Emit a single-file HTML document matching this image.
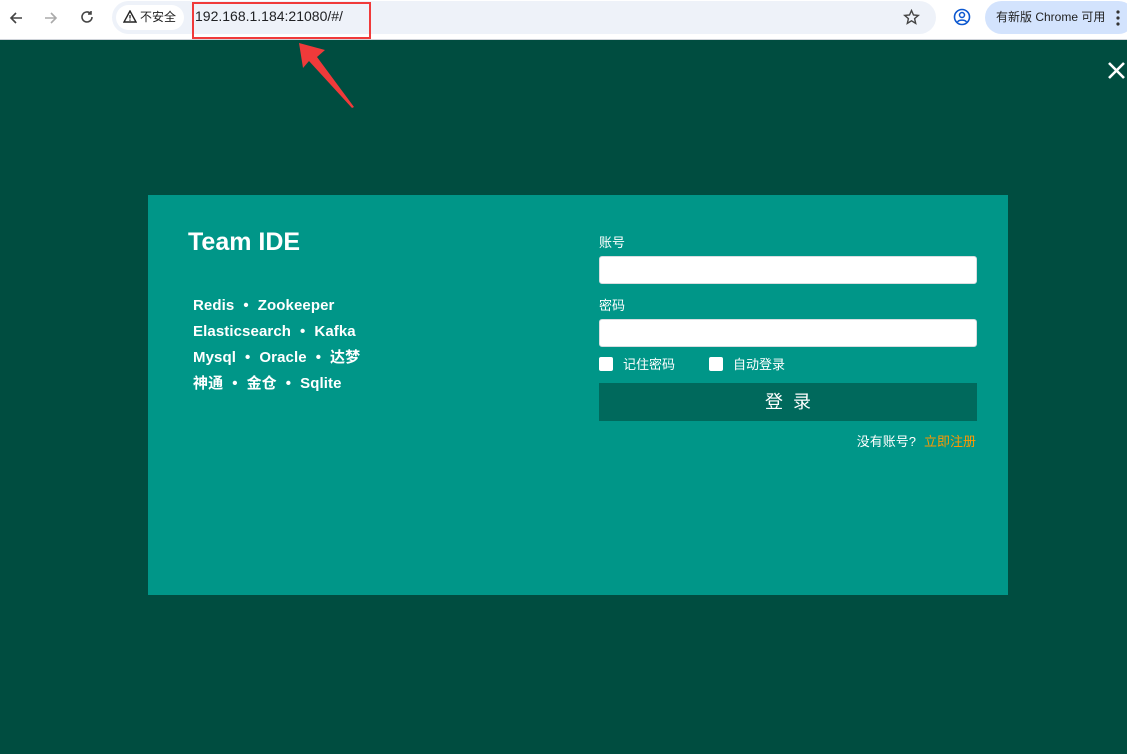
<!DOCTYPE html>
<html><head><meta charset="utf-8"><style>
*{margin:0;padding:0;box-sizing:border-box}
body{width:1127px;height:754px;overflow:hidden;background:#004d40;font-family:"Liberation Sans","Noto Sans CJK SC",sans-serif;position:relative}
.bar{position:absolute;left:0;top:0;width:1127px;height:40px;background:#fff;border-bottom:1px solid #d0d4da}
.omni{position:absolute;left:112px;top:1px;width:824px;height:33px;background:#eef2f9;border-radius:17px}
.sec{position:absolute;left:116px;top:5px;width:68px;height:25px;background:#fff;border-radius:13px;font-size:12px;color:#222;line-height:25px;padding-left:24px}
.url{position:absolute;left:195px;top:8px;font-size:14px;color:#202124}
.redbox{position:absolute;left:192px;top:2px;width:179px;height:37px;border:2px solid #f03a3a}
.upd{position:absolute;left:985px;top:1px;width:150px;height:33px;background:#d3e3fd;border-radius:17px;font-size:12px;color:#1f1f1f;line-height:33px;padding-left:11px}
.card{position:absolute;left:148px;top:195px;width:860px;height:400px;background:#009688}
.title{position:absolute;left:40px;top:33px;color:#fff;font-size:25px;font-weight:bold}
.dbs{position:absolute;left:45px;top:98px;color:#fff;font-size:15px;letter-spacing:0.1px;font-weight:bold;line-height:26px}
.dbs b{display:inline-block;margin:0 9px}
.lbl{position:absolute;left:451px;color:#fff;font-size:13px}
.inp{position:absolute;left:451px;width:378px;height:28px;background:#fff;border-radius:3px;border:1px solid #d8dde0}
.cb{position:absolute;top:162px;width:14px;height:14px;background:#fff;border-radius:2px}
.btn{position:absolute;left:451px;top:188px;width:378px;height:38px;background:#00695c;color:#fff;font-size:18px;text-align:center;line-height:38px;letter-spacing:10px;padding-left:10px}
.reg{position:absolute;right:32px;top:236px;font-size:13px;color:#fff}
.reg span{color:#ff9800;margin-left:8px}
</style></head><body>
<div class="bar">
<svg style="position:absolute;left:8px;top:10px" width="16" height="16" viewBox="0 0 16 16"><path d="M14 8H3M8 3L3 8l5 5" stroke="#444" stroke-width="1.6" fill="none"/></svg>
<svg style="position:absolute;left:43px;top:10px" width="16" height="16" viewBox="0 0 16 16"><path d="M2 8h11M8 3l5 5-5 5" stroke="#aaa" stroke-width="1.6" fill="none"/></svg>
<svg style="position:absolute;left:79px;top:9px" width="16" height="16" viewBox="0 0 16 16"><path d="M13 8a5 5 0 1 1-1.5-3.6M12 2v3h-3" stroke="#444" stroke-width="1.6" fill="none"/></svg>
<div class="omni"></div>
<div class="sec">不安全</div>
<svg style="position:absolute;left:123px;top:10px" width="14" height="13" viewBox="0 0 14 13"><path d="M7 1L1 12h12z" stroke="#222" stroke-width="1.4" fill="none"/><path d="M7 5v3.5M7 9.5v1.3" stroke="#222" stroke-width="1.3"/></svg>
<div class="url">192.168.1.184:21080/#/</div>
<div class="redbox"></div>
<svg style="position:absolute;left:903px;top:9px" width="17" height="16" viewBox="0 0 17 16"><path d="M8.5 1.5l2 4.5 4.8.4-3.7 3.2 1.1 4.8-4.2-2.6-4.2 2.6 1.1-4.8L1.7 6.4l4.8-.4z" stroke="#444" stroke-width="1.4" fill="none"/></svg>
<svg style="position:absolute;left:953px;top:8px" width="18" height="18" viewBox="0 0 18 18"><circle cx="9" cy="9" r="7.5" stroke="#0b57d0" stroke-width="1.6" fill="none"/><circle cx="9" cy="7" r="2.5" stroke="#0b57d0" stroke-width="1.5" fill="none"/><path d="M4.5 14c1.5-2.5 7.5-2.5 9 0" stroke="#0b57d0" stroke-width="1.5" fill="none"/></svg>
<div class="upd">有新版 Chrome 可用</div>
<svg style="position:absolute;left:1115px;top:9px" width="6" height="18"><circle cx="3" cy="3" r="1.6" fill="#333"/><circle cx="3" cy="9" r="1.6" fill="#333"/><circle cx="3" cy="15" r="1.6" fill="#333"/></svg>
</div>
<svg style="position:absolute;left:295px;top:40px" width="65" height="70" viewBox="0 0 65 70"><path d="M4 3L30 10 22 17 59 67 57 68 14 21 8 28z" fill="#f03a3a"/></svg>
<svg style="position:absolute;left:1107px;top:61px" width="19" height="19" viewBox="0 0 19 19"><path d="M2 2l15 15M17 2L2 17" stroke="#fff" stroke-width="2.6"/></svg>
<div class="card">
<div class="title">Team IDE</div>
<div class="dbs">Redis<b>•</b>Zookeeper<br>Elasticsearch<b>•</b>Kafka<br>Mysql<b>•</b>Oracle<b>•</b>达梦<br>神通<b>•</b>金仓<b>•</b>Sqlite</div>
<div class="lbl" style="top:37px">账号</div>
<div class="inp" style="top:61px"></div>
<div class="lbl" style="top:100px">密码</div>
<div class="inp" style="top:124px"></div>
<div class="cb" style="left:451px"></div><div class="lbl" style="left:475px;top:159px">记住密码</div>
<div class="cb" style="left:561px"></div><div class="lbl" style="left:585px;top:159px">自动登录</div>
<div class="btn">登录</div>
<div class="reg">没有账号?<span>立即注册</span></div>
</div>
</body></html>
